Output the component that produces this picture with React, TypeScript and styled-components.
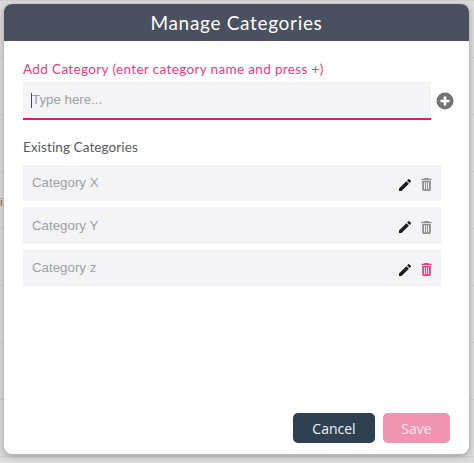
import React from "react";
import styled, { createGlobalStyle } from "styled-components";

const GlobalStyle = createGlobalStyle`
  html, body {
    margin: 0;
    height: 100%;
    overflow: hidden;
    background: #dcdcdc;
  }
  #root {
    height: 100%;
  }
`;

const Overlay = styled.div`
  position: relative;
  box-sizing: border-box;
  height: 463px;
  padding: 4px 5px 9px 4px;
  background: linear-gradient(to bottom, #dcdcdc 0, #dcdcdc 56px, #d0d0d0 56px, #d0d0d0 57px) 0 1px / 100% 57px;
`;

// sliver of the page behind the dialog, cut off by the window edge
const BehindGlyph = styled.span`
  position: absolute;
  left: 0;
  top: 197px;
  width: 3px;
  height: 11px;
  overflow: hidden;
  background: #ecdccf;
  color: #6f5a4c;
  font-family: "Liberation Sans", Arial, sans-serif;
  font-size: 11px;
  line-height: 11px;
`;

const Modal = styled.div`
  position: relative;
  display: flex;
  flex-direction: column;
  height: 100%;
  background: #ffffff;
  border-radius: 8px;
  overflow: hidden;
  box-shadow: 0 2px 7px rgba(0, 0, 0, 0.3);
  font-family: Lato, sans-serif;
`;

const Header = styled.div`
  height: 37px;
  flex: none;
  display: flex;
  align-items: center;
  justify-content: center;
  background: #4a5060;
  color: #ffffff;
  font-size: 19px;
  letter-spacing: 0.68px;
`;

const Body = styled.div`
  flex: 1;
  display: flex;
  flex-direction: column;
  padding: 20px 10px 0 19px;
`;

const AddLabel = styled.div`
  color: #e8407f;
  font-size: 13.5px;
  line-height: 16px;
  letter-spacing: 0.36px;
`;

const AddRow = styled.div`
  display: flex;
  align-items: center;
  gap: 5px;
  margin-top: 5px;
`;

const InputBox = styled.div`
  box-sizing: border-box;
  flex: none;
  width: 408px;
  height: 38px;
  display: flex;
  align-items: center;
  padding-left: 8px;
  background: #f4f4f7;
  border-bottom: 2px solid #cf2264;
`;

const Caret = styled.span`
  width: 1px;
  height: 15px;
  background: #444b58;
`;

const Placeholder = styled.span`
  margin-top: -1px;
  color: #9ca1a8;
  font-family: "Liberation Sans", Arial, sans-serif;
  font-size: 13.3px;
`;

const AddButton = styled.button`
  display: flex;
  margin-top: -1px;
  padding: 0;
  border: none;
  background: none;
`;

const SectionLabel = styled.div`
  margin-top: 19px;
  color: #5a5a5e;
  font-size: 13.5px;
  line-height: 16px;
  letter-spacing: 0.1px;
`;

const List = styled.div`
  display: flex;
  flex-direction: column;
  gap: 6px;
  width: 418px;
  margin-top: 9.5px;
`;

const Row = styled.div`
  box-sizing: border-box;
  height: 36.5px;
  display: flex;
  align-items: center;
  padding: 0 8px 0 9px;
  background: #f4f4f7;
`;

const RowName = styled.span`
  flex: 1;
  color: #9ca1a8;
  font-family: "Liberation Sans", Arial, sans-serif;
  font-size: 13.3px;
`;

const Icons = styled.div`
  display: flex;
  align-items: center;
  gap: 10px;
  margin: 4px 1px 0 0;
`;

const Footer = styled.div`
  display: flex;
  justify-content: flex-end;
  gap: 8px;
  padding: 0 19px 11px 0;
`;

const FooterButton = styled.button<{ $primary?: boolean }>`
  box-sizing: border-box;
  height: 30px;
  width: ${(p) => (p.$primary ? "67px" : "82px")};
  border: none;
  border-radius: 5px;
  background: ${(p) => (p.$primary ? "#ef94b1" : "#2f4050")};
  color: ${(p) => (p.$primary ? "#fbe4ec" : "#f1f4f6")};
  font-family: "Open Sans", sans-serif;
  font-size: 14px;
`;

const PlusIcon = () => (
  <svg width="18" height="18" viewBox="0 0 18 18">
    <circle cx="9" cy="9" r="8.500" fill="#757575" />
    <path d="M9 4.500v9M4.500 9h9" stroke="#fff" strokeWidth="2.600" />
  </svg>
);

const PencilIcon = () => (
  <svg width="12" height="12" viewBox="3 3 18 18" fill="#1c1c1c">
    <path d="M3 17.250V21h3.750L17.810 9.940l-3.750-3.750L3 17.250zM20.710 7.040a1 1 0 0 0 0-1.410l-2.340-2.340a1 1 0 0 0-1.410 0l-1.830 1.830 3.750 3.750 1.830-1.830z" />
  </svg>
);

const TrashIcon = ({ color }: { color: string }) => (
  <svg width="11" height="13" viewBox="5 3 14 18" fill={color}>
    <path d="M15.500 4l-1-1h-5l-1 1H5v2h14V4h-3.500z" />
    <path
      fillRule="evenodd"
      d="M6 19c0 1.100.9 2 2 2h8c1.100 0 2-.9 2-2V7H6v12zm2.500-10h1.400v9.500H8.500V9zm2.800 0h1.400v9.500h-1.400V9zm2.800 0h1.400v9.500h-1.400V9z"
    />
  </svg>
);

const categories = [
  { name: "Category X", trash: "#8f8f8f" },
  { name: "Category Y", trash: "#8f8f8f" },
  { name: "Category z", trash: "#ec407a" },
];

export default function App() {
  return (
    <>
      <GlobalStyle />
      <Overlay>
        <BehindGlyph>i</BehindGlyph>
        <Modal>
          <Header>Manage Categories</Header>
          <Body>
            <AddLabel>Add Category (enter category name and press +)</AddLabel>
            <AddRow>
              <InputBox>
                <Caret />
                <Placeholder>Type here...</Placeholder>
              </InputBox>
              <AddButton>
                <PlusIcon />
              </AddButton>
            </AddRow>
            <SectionLabel>Existing Categories</SectionLabel>
            <List>
              {categories.map((c) => (
                <Row key={c.name}>
                  <RowName>{c.name}</RowName>
                  <Icons>
                    <PencilIcon />
                    <TrashIcon color={c.trash} />
                  </Icons>
                </Row>
              ))}
            </List>
          </Body>
          <Footer>
            <FooterButton>Cancel</FooterButton>
            <FooterButton $primary>Save</FooterButton>
          </Footer>
        </Modal>
      </Overlay>
    </>
  );
}
